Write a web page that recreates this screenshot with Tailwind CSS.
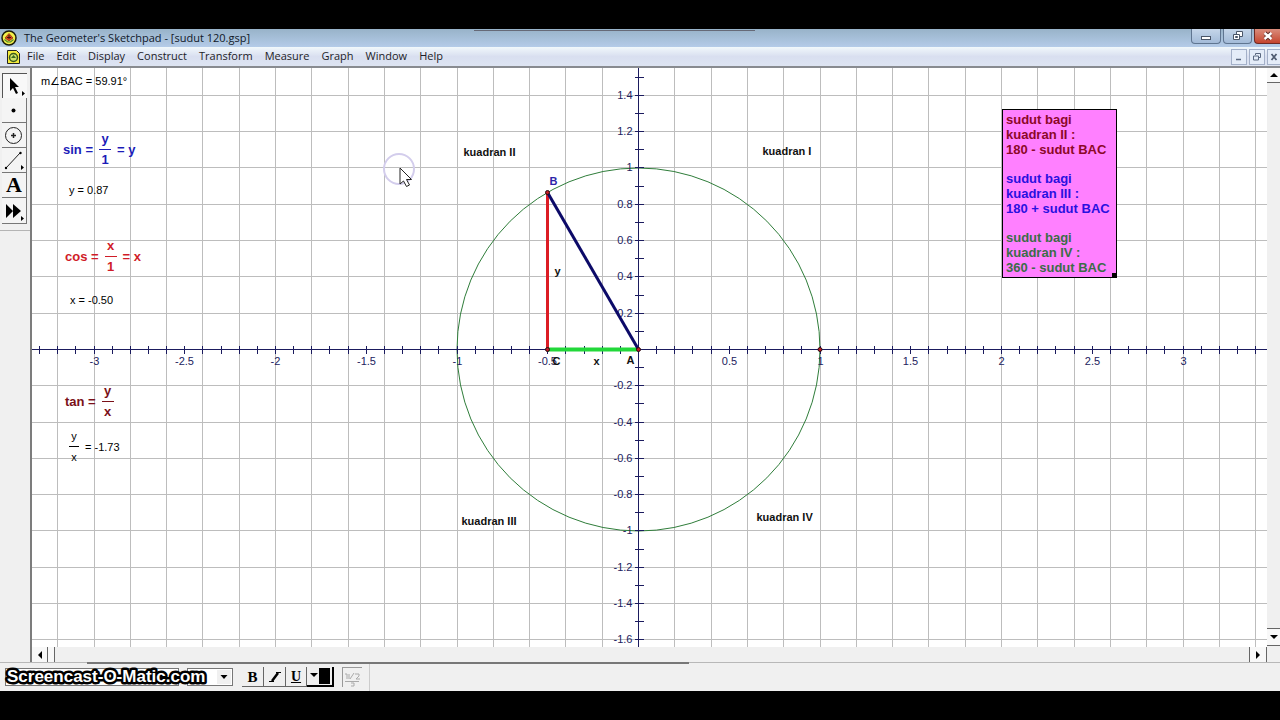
<!DOCTYPE html>
<html lang="en">
  <head>
    <meta charset="UTF-8" />
    <meta name="viewport" content="width=device-width, initial-scale=1.0" />
    <title>The Geometer's Sketchpad - [sudut 120.gsp]</title>
    <script src="https://cdn.jsdelivr.net/npm/@tailwindcss/browser@4"></script>
  </head>

  <body class="bg-black font-['Liberation_Sans',sans-serif] text-black">
    <div class="relative flex h-screen flex-col overflow-hidden py-[29px]">
      <!-- Title bar -->
      <header class="relative flex h-[18px] shrink-0 items-center bg-linear-to-b from-[#98b3c9] to-[#b4cbe8] font-['Open_Sans',sans-serif]">
        <svg class="ml-px h-4 w-4" viewBox="0 0 16 16">
          <circle cx="8" cy="8" r="7" fill="#f4ee4a" stroke="#1c1c08" stroke-width="1.5" />
          <path d="M8 3.500l4 4.500-4 3-4-3z" fill="#e0451c" stroke="#7a3010" stroke-width=".7" />
          <path d="M3.500 9.500l3 2.500h3l3-2.500" fill="none" stroke="#4d8a2c" stroke-width="1.200" />
          <path d="M8 5v4M6 7.500h4" stroke="#3a1a08" />
        </svg>
        <h1 class="ml-[7px] text-[11px] text-[#101828]">The Geometer's Sketchpad - [sudut 120.gsp]</h1>
        <div class="absolute top-0 left-[37%] h-0.5 w-[22%] border-b border-[#666a78]"></div>
        <div class="ml-auto flex h-[15px] self-start">
          <button aria-label="Minimize" class="mr-0.5 flex w-[30px] items-center justify-center rounded-b-sm border border-t-0 border-[#5f7590] bg-linear-to-b from-[#c5d6e9] to-[#a3bbd8]">
            <svg class="h-3 w-3" viewBox="0 0 12 12"><rect x="1.5" y="6.5" width="9" height="3" fill="#fff" stroke="#4a5668" /></svg>
          </button>
          <button aria-label="Restore" class="mr-0.5 flex w-[29px] items-center justify-center rounded-b-sm border border-t-0 border-[#5f7590] bg-linear-to-b from-[#c5d6e9] to-[#a3bbd8]">
            <svg class="h-3 w-3" viewBox="0 0 12 12"><path d="M4.500 1.500h6v5h-6z" fill="#fff" stroke="#4a5668" /><path d="M1.500 4.500h6v5h-6z" fill="#fff" stroke="#4a5668" /><path d="M3.500 6.500h2v1h-2z" fill="#a3bbd8" stroke="#4a5668" /></svg>
          </button>
          <button aria-label="Close" class="flex w-[26px] items-center justify-center rounded-bl-sm border border-t-0 border-r-0 border-[#6e2a24] bg-linear-to-b from-[#d98c7c] to-[#c4432c]">
            <svg class="h-3 w-3" viewBox="0 0 12 12"><path d="M3 3l6 6M9 3l-6 6" stroke="#5a2a28" stroke-width="4" /><path d="M2.500 3l7 6M9.500 3l-7 6" stroke="#fff" stroke-width="2.400" /></svg>
          </button>
        </div>
      </header>

      <!-- Menu bar -->
      <nav class="flex h-[21px] shrink-0 items-center border-b-2 border-[#888b90] bg-linear-to-b from-[#f1f8fb] via-[#d9dff0] to-[#dde4f2] font-['Open_Sans',sans-serif] text-[11px] text-[#1d1d28]">
        <svg class="mr-[7px] ml-[7px] h-3.5 w-[13px]" viewBox="0 0 13 14">
          <path d="M.5.500h9l3 3v10H.5z" fill="#f5ec3c" stroke="#222" />
          <circle cx="6.500" cy="7.500" r="4" fill="#cfe36a" stroke="#3b5a1c" stroke-width="1.500" />
          <path d="M4 8l2.500-3L9 8z" fill="#3b6a1c" />
        </svg>
        <div class="flex gap-3">
          <button>File</button>
          <button>Edit</button>
          <button>Display</button>
          <button>Construct</button>
          <button>Transform</button>
          <button>Measure</button>
          <button>Graph</button>
          <button>Window</button>
          <button>Help</button>
        </div>
        <div class="ml-auto flex h-4 gap-0.5">
          <button aria-label="Minimize document" class="flex w-4 items-center justify-center border border-[#a3b0c8] bg-[#e4ecf8]">
            <svg class="h-3 w-3" viewBox="0 0 12 12"><path d="M3 8.500h5" stroke="#5a6880" stroke-width="1.500" /></svg>
          </button>
          <button aria-label="Restore document" class="flex w-4 items-center justify-center border border-[#a3b0c8] bg-[#e4ecf8]">
            <svg class="h-3 w-3" viewBox="0 0 12 12"><path d="M4.500 4V2.500h5v4H8M2.500 5h5v4h-5z" fill="none" stroke="#5a6880" /></svg>
          </button>
          <button aria-label="Close document" class="flex w-[13px] items-center justify-center border border-r-0 border-[#a3b0c8] bg-[#e4ecf8]">
            <svg class="h-3 w-3" viewBox="0 0 12 12"><path d="M3.500 3l5 6M8.500 3l-5 6" stroke="#4f5b70" stroke-width="1.800" /></svg>
          </button>
        </div>
      </nav>

      <div class="flex min-h-0 flex-1 bg-[#f0f0f0]">
        <!-- Toolbox -->
        <aside class="w-8 shrink-0 border-r-2 border-[#7c7c7c]">
          <div class="flex flex-col border-b border-[#b4b4b4] pt-[5px] pb-1.5 pl-0.5">
            <button aria-label="Selection arrow" class="h-[25px] w-[25px] border-t border-l border-[#555] bg-[#f8f8f8]">
              <svg class="h-6 w-6" viewBox="0 0 24 24"><path d="M7 4v13l3-3 3 6 2-1-3-6h4z" /><path d="M19 17v5l3-2.500z" /></svg>
            </button>
            <button aria-label="Point" class="h-[25px] w-[25px] border-r border-b border-[#777] bg-[#f4f4f4]">
              <svg class="h-6 w-6" viewBox="0 0 24 24"><circle cx="11.500" cy="12.500" r="2" /></svg>
            </button>
            <button aria-label="Compass" class="h-[25px] w-[25px] border-r border-b border-[#777] bg-[#f4f4f4]">
              <svg class="h-6 w-6" viewBox="0 0 24 24" fill="none" stroke="#222"><circle cx="11.500" cy="12.500" r="8" /><path d="M9 12.500h5M11.500 10v5" stroke-width="1.500" /></svg>
            </button>
            <button aria-label="Straightedge" class="h-[25px] w-[25px] border-r border-b border-[#777] bg-[#f4f4f4]">
              <svg class="h-6 w-6" viewBox="0 0 24 24"><path d="M4 20L18 5" stroke="#222" /><circle cx="4" cy="20" r="1.200" /><circle cx="18.500" cy="5" r="1.200" /><path d="M19 17v5l3-2.500z" /></svg>
            </button>
            <button class="h-[25px] w-[25px] border-r border-b border-[#777] bg-[#f4f4f4] font-['Liberation_Serif',serif] text-[22px] leading-6 font-bold">A</button>
            <button aria-label="Custom tools" class="h-[26px] w-[25px] border-r border-b border-[#777] bg-[#f4f4f4]">
              <svg class="h-6 w-6" viewBox="0 0 24 24"><path d="M4 5v14l7-7zM11 5v14l8-7z" /><path d="M19 17v5l3-2.500z" /></svg>
            </button>
          </div>
        </aside>

        <div class="flex min-w-0 flex-1 flex-col">
          <!-- Sketch -->
          <main class="relative min-h-0 flex-1 overflow-hidden bg-white">
            <svg class="absolute inset-0 h-full w-full text-[11px]">
              <g transform="translate(606.5 281.5)">
                <g id="grid" stroke="#bdbdbd" shape-rendering="crispEdges"></g>
                <circle r="181.500" fill="none" stroke="#2f7d3a" />
                <g id="axes" stroke="#1b1b5e" shape-rendering="crispEdges">
                  <path d="M-700 0H700M0-400V400" />
                </g>
                <g id="labels" fill="#22225e"></g>
                <path d="M-91 0H0" stroke="#22d83a" stroke-width="4" />
                <path d="M-91 0V-157" stroke="#dc1c24" stroke-width="3" />
                <path d="M-91-157L0 0" stroke="#0c0a68" stroke-width="3" />
                <g fill="#c01c24" stroke="#2a0a10">
                  <circle cx="-91" cy="-157" r="2" />
                  <circle cx="-91" r="2" />
                  <circle r="2" />
                  <circle cx="181.500" r="2" />
                </g>
                <g class="text-[11px] font-bold" fill="#111">
                  <text x="-175" y="-194">kuadran II</text>
                  <text x="124" y="-195">kuadran I</text>
                  <text x="-177" y="175">kuadran III</text>
                  <text x="118" y="171">kuadran IV</text>
                  <text x="-89" y="-165" fill="#2c24a8">B</text>
                  <text x="-84" y="-75">y</text>
                  <text x="-45" y="15">x</text>
                  <text x="-12" y="14">A</text>
                  <text x="-86" y="15">C</text>
                </g>
              </g>
              <!-- click ring and pointer -->
              <circle cx="367" cy="101" r="15" fill="none" stroke="#d3cdec" stroke-width="2" />
              <path d="M368 100v16l3.500-3 3 5.500 3-1.500-3-5.500h5z" fill="#fff" stroke="#222" />
            </svg>

            <!-- Measurements -->
            <p class="absolute top-[6px] left-[9px] text-[11px] leading-[14px]">m∠BAC = 59.91°</p>
            <div class="absolute top-[63px] left-[31px] flex items-center gap-1.5 text-[13px] leading-4 font-bold text-[#1c1cb8]">
              sin =
              <span class="flex w-3 flex-col text-center"><span class="border-b border-current pb-0.5">y</span><span class="pt-0.5">1</span></span>
              = y
            </div>
            <p class="absolute top-[115px] left-[37px] text-[11px] leading-[14px]">y = 0.87</p>
            <div class="absolute top-[170px] left-[33px] flex items-center gap-1.5 text-[13px] leading-4 font-bold text-[#d01c28]">
              cos =
              <span class="flex w-3 flex-col text-center"><span class="border-b border-current pb-0.5">x</span><span class="pt-0.5">1</span></span>
              = x
            </div>
            <p class="absolute top-[225px] left-[38px] text-[11px] leading-[14px]">x = -0.50</p>
            <div class="absolute top-[315px] left-[33px] flex items-center gap-1.5 text-[13px] leading-4 font-bold text-[#7a1018]">
              tan =
              <span class="flex w-3 flex-col text-center"><span class="border-b border-current pb-0.5">y</span><span class="pt-0.5">x</span></span>
            </div>
            <div class="absolute top-[360px] left-[37px] flex items-center gap-1.5 text-[11px] leading-4">
              <span class="flex w-2.5 flex-col text-center"><span class="border-b border-current pb-0.5">y</span><span class="pt-0.5">x</span></span>
              = -1.73
            </div>

            <!-- Caption box -->
            <div class="absolute top-[41px] left-[970px] border border-black bg-[#ff80ff] pt-0.5 pr-1.5 pb-0.5 pl-[3px] text-[13px] leading-[15px] font-bold">
              <p class="mb-3.5 text-[#8c0828]">sudut bagi<br />kuadran II :<br />180 - sudut BAC</p>
              <p class="mb-3.5 text-[#2a10e0]">sudut bagi<br />kuadran III :<br />180 + sudut BAC</p>
              <p class="text-[#3c6c48]">sudut bagi<br />kuadran IV :<br />360 - sudut BAC</p>
              <span class="absolute right-0 bottom-0 h-1 w-1 bg-black"></span>
            </div>
          </main>

          <!-- Horizontal scroll bar -->
          <div class="flex h-[15px] shrink-0">
            <button aria-label="Scroll left" class="flex w-4 items-center justify-center border-r border-[#666] bg-[#f8f8f8]">
              <svg class="h-2 w-2" viewBox="0 0 8 8"><path d="M6 0v8L2 4z" /></svg>
            </button>
            <div class="w-[7px] border-r border-[#666] bg-[#f8f8f8]"></div>
            <div class="flex-1 border-r border-[#666]"></div>
            <button aria-label="Scroll right" class="flex w-[17px] items-center justify-center border-r border-[#666] bg-[#f8f8f8]">
              <svg class="h-2 w-2" viewBox="0 0 8 8"><path d="M2 0v8l4-4z" /></svg>
            </button>
          </div>
        </div>

        <!-- Vertical scroll bar -->
        <div class="flex w-[13px] shrink-0 flex-col pb-4">
          <button aria-label="Scroll up" class="flex h-[15px] items-center justify-center border-b border-[#666] bg-[#f8f8f8]">
            <svg class="h-2 w-2" viewBox="0 0 8 8"><path d="M0 6h8L4 2z" /></svg>
          </button>
          <div class="flex-1 border-b border-[#666]"></div>
          <button aria-label="Scroll down" class="flex h-[17px] items-center justify-center border-b border-[#666] bg-[#f8f8f8]">
            <svg class="h-2 w-2" viewBox="0 0 8 8"><path d="M0 2h8L4 6z" /></svg>
          </button>
        </div>
      </div>

      <!-- Text palette -->
      <footer class="relative flex h-[29px] shrink-0 items-center border-t border-[#b8b8b8] bg-[#f0f0f0]">
        <div class="absolute -top-px left-[87px] h-0.5 w-[47%] bg-[#777]"></div>
        <select aria-label="Font" class="ml-[5px] h-[18px] w-[174px] appearance-none border border-[#777] bg-white px-1 text-[11px]"></select>
        <div class="relative ml-2">
          <select aria-label="Font size" class="block h-[18px] w-[46px] appearance-none border border-[#777] bg-white px-1 text-[11px]"></select>
          <svg class="pointer-events-none absolute top-0.5 right-0.5 h-3.5 w-3.5 bg-[#f0f0f0]" viewBox="0 0 14 14"><path d="M3.500 5h7L7 9z" /></svg>
        </div>
        <div class="ml-[9px] flex h-5">
          <button class="w-[22px] border-r border-b border-[#666] font-['Liberation_Serif',serif] text-[15px] leading-4 font-bold">B</button>
          <button aria-label="Italic" class="flex w-[22px] items-center justify-center border-r border-b border-[#666]">
            <svg class="h-4 w-4" viewBox="0 0 16 16"><path d="M5 12L11 4" stroke="#000" stroke-width="2.500" /><path d="M2 12.500h5M9 3.500h5" stroke="#000" /></svg>
          </button>
          <button class="w-[21px] border-r border-b border-[#666] font-['Liberation_Serif',serif] text-[14px] leading-4 font-bold underline">U</button>
          <button aria-label="Text colour" class="flex w-[27px] items-center justify-center gap-px border-r-2 border-b-2 border-black">
            <svg class="h-2 w-2" viewBox="0 0 8 8"><path d="M0 1h8L4 5z" /></svg>
            <span class="h-4 w-[11px] bg-black"></span>
          </button>
          <button aria-label="Math notation" class="ml-2 w-5 border-t border-l border-[#999]">
            <svg class="h-[18px] w-[18px]" viewBox="0 0 18 18" fill="none" stroke="#aaa"><path d="M2 5h2v5M6 5v5M7 10l4-6M12 5h4v2l-3 3h4M2 12.500h14M8 14h3v3H8" /></svg>
          </button>
        </div>
        <div class="ml-[7px] h-full border-l border-[#ccc]"></div>
        <!-- Recorder watermark -->
        <svg class="pointer-events-none absolute top-0 left-0 h-7 w-[216px] text-[17px] font-bold">
          <text x="7" y="19" fill="#fff" stroke="#000" stroke-width="5" stroke-linejoin="round" paint-order="stroke">Screencast-O-Matic.com</text>
        </svg>
      </footer>
    </div>

    <script>
      const NS = "http://www.w3.org/2000/svg";
      const UNIT = 181.5;
      const grid = document.getElementById("grid");
      const axes = document.getElementById("axes");
      const labels = document.getElementById("labels");

      const addPath = (parent, d) => {
        const path = document.createElementNS(NS, "path");
        path.setAttribute("d", d);
        parent.appendChild(path);
      };

      const addLabel = (x, y, anchor, value) => {
        const text = document.createElementNS(NS, "text");
        text.setAttribute("x", x);
        text.setAttribute("y", y);
        text.setAttribute("text-anchor", anchor);
        text.textContent = value;
        labels.appendChild(text);
      };

      // i counts tenths of a unit
      for (let i = -33; i <= 34; i++) {
        if (i === 0) continue;
        const p = Math.round((i * UNIT) / 10);
        if (i % 2 === 0) addPath(grid, `M${p}-400V400`);
        addPath(axes, `M${p}-4V4`);
        if (i % 5 === 0) addLabel(p, 15, "middle", i / 10);
        if (i >= -16 && i <= 15) {
          if (i % 2 === 0) {
            addPath(grid, `M-700 ${-p}H700`);
            addLabel(-6, -p + 3, "end", i / 10);
          }
          addPath(axes, `M-4 ${-p}H5`);
        }
      }
    </script>
  </body>
</html>
